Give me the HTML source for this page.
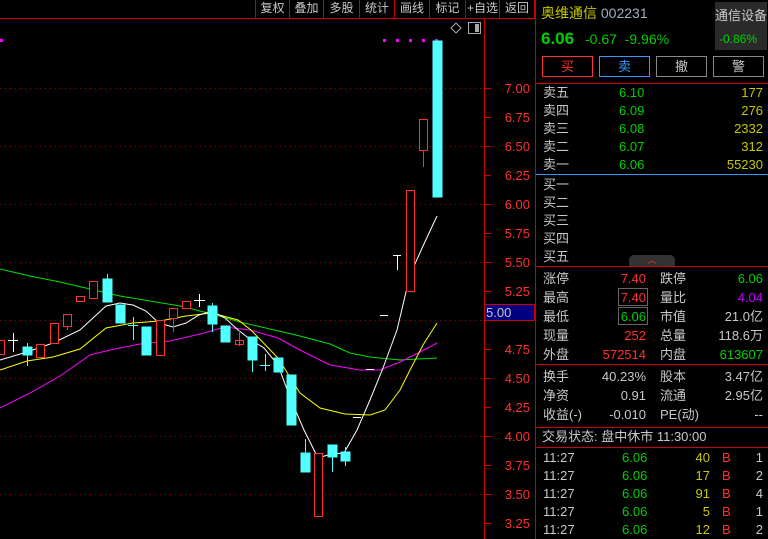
<!DOCTYPE html>
<html><head><meta charset="utf-8">
<style>
*{margin:0;padding:0;box-sizing:border-box}
body{width:768px;height:539px;background:#000;overflow:hidden;position:relative;font-family:"Liberation Sans","Noto Sans CJK SC",sans-serif;font-size:13px;color:#c8c8c8}
.a{position:absolute;white-space:nowrap;line-height:16px}
.r{text-align:right}
.tb{position:absolute;top:0;height:18px;border-left:1px solid #c00;color:#c8c8c8;font-size:12px;line-height:17px;text-align:center}
.hl{position:absolute;left:536px;width:232px;height:1px;background:#c00}
.g{color:#00d000}.y{color:#c8c800}.rd{color:#ff3030}
.btn{position:absolute;top:56px;height:21px;width:51px;border:1px solid #888;text-align:center;line-height:19px;font-size:13px}
</style></head><body>
<div class="tb" style="left:255px;width:34px">复权</div>
<div class="tb" style="left:289px;width:34px">叠加</div>
<div class="tb" style="left:323px;width:36px">多股</div>
<div class="tb" style="left:359px;width:35px">统计</div>
<div class="tb" style="left:394px;width:35px">画线</div>
<div class="tb" style="left:429px;width:36px">标记</div>
<div class="tb" style="left:465px;width:34px">+自选</div>
<div class="tb" style="left:499px;width:36px;border-right:1px solid #c00">返回</div>
<div style="position:absolute;left:0;top:18px;width:536px;height:1px;background:#c00"></div>
<div style="position:absolute;left:535px;top:0;width:1px;height:539px;background:#c00"></div>

<svg style="position:absolute;left:0;top:0" width="536" height="539">
<g stroke="#a00" stroke-dasharray="1,4" stroke-width="1">
<line x1="0" y1="88.5" x2="484" y2="88.5"/><line x1="0" y1="146.5" x2="484" y2="146.5"/><line x1="0" y1="204.5" x2="484" y2="204.5"/><line x1="0" y1="262.5" x2="484" y2="262.5"/><line x1="0" y1="320.5" x2="484" y2="320.5"/><line x1="0" y1="378.5" x2="484" y2="378.5"/><line x1="0" y1="436.5" x2="484" y2="436.5"/><line x1="0" y1="494.5" x2="484" y2="494.5"/>
</g>
<line x1="484.5" y1="18" x2="484.5" y2="539" stroke="#c00"/>
<g stroke="#c00"><line x1="484" y1="88.5" x2="491" y2="88.5"/><line x1="484" y1="117.5" x2="491" y2="117.5"/><line x1="484" y1="146.5" x2="491" y2="146.5"/><line x1="484" y1="175.5" x2="491" y2="175.5"/><line x1="484" y1="204.5" x2="491" y2="204.5"/><line x1="484" y1="233.5" x2="491" y2="233.5"/><line x1="484" y1="262.5" x2="491" y2="262.5"/><line x1="484" y1="291.5" x2="491" y2="291.5"/><line x1="484" y1="349.5" x2="491" y2="349.5"/><line x1="484" y1="378.5" x2="491" y2="378.5"/><line x1="484" y1="407.5" x2="491" y2="407.5"/><line x1="484" y1="436.5" x2="491" y2="436.5"/><line x1="484" y1="465.5" x2="491" y2="465.5"/><line x1="484" y1="494.5" x2="491" y2="494.5"/><line x1="484" y1="523.5" x2="491" y2="523.5"/></g>
<g fill="#ff3030" font-size="13" text-anchor="end" font-family="Liberation Sans">
<text x="530" y="93">7.00</text><text x="530" y="122">6.75</text><text x="530" y="151">6.50</text><text x="530" y="180">6.25</text><text x="530" y="209">6.00</text><text x="530" y="238">5.75</text><text x="530" y="267">5.50</text><text x="530" y="296">5.25</text><text x="530" y="354">4.75</text><text x="530" y="383">4.50</text><text x="530" y="412">4.25</text><text x="530" y="441">4.00</text><text x="530" y="470">3.75</text><text x="530" y="499">3.50</text><text x="530" y="528">3.25</text>
</g>
<rect x="484.5" y="304.5" width="50" height="16" fill="#000080" stroke="#c00"/>
<text x="486" y="317" fill="#c8c8c8" font-size="13" font-family="Liberation Sans">5.00</text>
<g fill="#f0f"><rect x="0" y="39" width="3" height="3"/><rect x="383" y="39" width="3" height="3"/><rect x="396" y="39" width="3" height="3"/><rect x="409" y="39" width="3" height="3"/><rect x="422" y="39" width="3" height="3"/><rect x="435" y="39" width="3" height="3"/></g>
<path d="M456 23 L461 28 L456 33 L451 28Z" fill="none" stroke="#aaa"/>
<rect x="468.5" y="22.5" width="12" height="11" fill="none" stroke="#aaa"/><rect x="475" y="24" width="4" height="8" fill="#aaa"/>
<g fill="none" stroke-width="1">
<polyline stroke="#00e000" points="0,269 30,276 60,282 90,289 120,296 150,301 180,306 212,314 240,322 270,329 300,336 330,344 350,353 370,357 400,360 437,358"/>
<polyline stroke="#f0f" points="0,408 30,393 60,376 90,355 110,350 140,344 170,341 200,334 225,327 250,330 278,338 300,350 330,365 360,370 380,370 400,362 420,352 437,343"/>
<polyline stroke="#ff0" points="0,370 27,361 53,357 80,349 106,328 133,323 160,321 186,316 212,313 238,320 251,330 278,358 300,393 320,408 345,414 370,415 385,410 400,390 410,370 423,345 437,323"/>
<polyline stroke="#fff" points="0,360 27,352 53,343 80,330 93,318 106,306 120,303 133,305 146,311 159,323 173,327 186,323 199,315 212,311 225,318 238,330 251,340 264,348 278,365 291,400 304,430 318,458 331,454 344,453 357,430 370,400 383,368 397,330 410,275 423,246 437,216"/>
</g>
<g stroke="#ff3030" fill="#000">
<rect x="-2.5" y="340.5" width="7" height="14"/>
<rect x="36.5" y="344.5" width="8" height="13"/>
<rect x="50.5" y="323.5" width="8" height="20"/>
<rect x="63.5" y="314.5" width="8" height="12"/><line x1="67.5" y1="326" x2="67.5" y2="330"/>
<rect x="76.5" y="296.5" width="8" height="5"/>
<rect x="89.5" y="281.5" width="8" height="17"/>
<rect x="156.5" y="320.5" width="8" height="35"/>
<rect x="169.5" y="308.5" width="8" height="10"/><line x1="173.5" y1="318" x2="173.5" y2="332"/>
<rect x="182.5" y="301.5" width="8" height="7"/>
<rect x="235.5" y="340.5" width="8" height="4"/><line x1="239.5" y1="330" x2="239.5" y2="346"/>
<rect x="314.5" y="453.5" width="8" height="63"/>
<rect x="406.5" y="190.5" width="8" height="101"/>
<rect x="419.5" y="119.5" width="8" height="31"/><line x1="423.5" y1="151" x2="423.5" y2="167"/>
</g>
<g fill="#50ffff" stroke="#50ffff">
<rect x="23" y="347" width="9" height="8"/><line x1="27.5" y1="343" x2="27.5" y2="366"/>
<rect x="103" y="279" width="9" height="23"/><line x1="107.5" y1="274" x2="107.5" y2="280"/>
<rect x="116" y="305" width="9" height="18"/>
<line x1="128" y1="325.5" x2="138" y2="325.5"/><line x1="133.5" y1="317" x2="133.5" y2="340"/>
<rect x="142" y="327" width="9" height="28"/>
<rect x="208" y="306" width="9" height="18"/><line x1="212.5" y1="303" x2="212.5" y2="332"/>
<rect x="221" y="326" width="9" height="16"/>
<rect x="248" y="337" width="9" height="23"/><line x1="252.5" y1="360" x2="252.5" y2="372"/>
<line x1="260" y1="365.5" x2="270" y2="365.5"/><line x1="265.5" y1="354" x2="265.5" y2="371"/>
<rect x="274" y="358" width="9" height="14"/>
<rect x="287" y="375" width="9" height="50"/>
<rect x="301" y="453" width="9" height="19"/><line x1="305.5" y1="439" x2="305.5" y2="453"/>
<rect x="328" y="445" width="9" height="12"/><line x1="332.5" y1="457" x2="332.5" y2="472"/>
<rect x="341" y="452" width="9" height="9"/><line x1="345.5" y1="447" x2="345.5" y2="466"/>
<rect x="433" y="41" width="9" height="156"/>
</g>
<g stroke="#fff">
<line x1="8" y1="340.5" x2="18" y2="340.5"/><line x1="13.5" y1="333" x2="13.5" y2="352"/>
<line x1="194" y1="300.5" x2="205" y2="300.5"/><line x1="199.5" y1="294" x2="199.5" y2="307"/>
<line x1="353" y1="417.5" x2="361" y2="417.5"/><line x1="366" y1="369.5" x2="374" y2="369.5"/><line x1="380" y1="315.5" x2="388" y2="315.5"/>
<line x1="393" y1="255.5" x2="401" y2="255.5"/><line x1="397.5" y1="255" x2="397.5" y2="270"/>
</g>
</svg>

<div class="a y" style="left:541px;top:5px;font-size:14px">奥维通信 <span style="color:#a0b0c0">002231</span></div>
<div style="position:absolute;left:715px;top:2px;width:52px;height:48px;background:#2a2a2a"></div>
<div class="a" style="left:715px;top:8px;font-size:13px">通信设备</div>
<div class="a g" style="left:719px;top:31px;font-size:12px">-0.86%</div>
<div class="a g" style="left:541px;top:29px;font-size:17px;font-weight:bold;line-height:20px">6.06</div>
<div class="a g" style="left:585px;top:31px;font-size:14px">-0.67&nbsp;&nbsp;-9.96%</div>
<div class="btn rd" style="left:542px;border-color:#f33">买</div>
<div class="btn" style="left:599px;border-color:#39f;color:#39f">卖</div>
<div class="btn" style="left:656px">撤</div>
<div class="btn" style="left:713px">警</div>
<div class="hl" style="top:83px"></div>
<div class="a" style="left:543px;top:84px;line-height:18px">卖五<br>卖四<br>卖三<br>卖二<br>卖一</div>
<div class="a g" style="left:619px;top:84px;line-height:18px">6.10<br>6.09<br>6.08<br>6.07<br>6.06</div>
<div class="a y r" style="right:5px;top:84px;line-height:18px">177<br>276<br>2332<br>312<br>55230</div>
<div class="hl" style="top:174px;background:#39f"></div>
<div class="a" style="left:543px;top:176px;line-height:18px">买一<br>买二<br>买三<br>买四<br>买五</div>
<div style="position:absolute;left:629px;top:255px;width:46px;height:11px;background:#333;border-radius:5px 5px 0 0;color:#f33;font-size:9px;text-align:center;line-height:11px">︿</div>
<div class="hl" style="top:266px"></div>
<div class="a" style="left:543px;top:269px;line-height:19px">涨停<br>最高<br>最低<br>现量<br>外盘</div>
<div class="a r" style="right:122px;top:269px;line-height:19px"><span class="rd">7.40</span><br><span class="rd">7.40</span><br><span class="g">6.06</span><br><span class="rd">252</span><br><span class="rd">572514</span></div>
<div style="position:absolute;left:618px;top:288px;width:30px;height:18px;border:1px solid #666"></div>
<div style="position:absolute;left:618px;top:307px;width:30px;height:18px;border:1px solid #666"></div>
<div class="a" style="left:660px;top:269px;line-height:19px">跌停<br>量比<br>市值<br>总量<br>内盘</div>
<div class="a r" style="right:5px;top:269px;line-height:19px"><span class="g">6.06</span><br><span style="color:#c000ff">4.04</span><br>21.0亿<br>118.6万<br><span class="g">613607</span></div>
<div class="hl" style="top:364px"></div>
<div class="a" style="left:543px;top:367px;line-height:19px">换手<br>净资<br>收益(-)</div>
<div class="a r" style="right:122px;top:367px;line-height:19px">40.23%<br>0.91<br>-0.010</div>
<div class="a" style="left:660px;top:367px;line-height:19px">股本<br>流通<br>PE(动)</div>
<div class="a r" style="right:5px;top:367px;line-height:19px">3.47亿<br>2.95亿<br>--</div>
<div class="hl" style="top:427px"></div>
<div class="a" style="left:542px;top:429px">交易状态: 盘中休市 11:30:00</div>
<div class="hl" style="top:447px"></div>
<div class="a" style="left:543px;top:449px;line-height:18px">11:27<br>11:27<br>11:27<br>11:27<br>11:27</div>
<div class="a g" style="left:622px;top:449px;line-height:18px">6.06<br>6.06<br>6.06<br>6.06<br>6.06</div>
<div class="a y r" style="right:58px;top:449px;line-height:18px">40<br>17<br>91<br>5<br>12</div>
<div class="a rd" style="left:722px;top:449px;line-height:18px">B<br>B<br>B<br>B<br>B</div>
<div class="a r" style="right:5px;top:449px;line-height:18px">1<br>2<br>4<br>1<br>2</div>
</body></html>
